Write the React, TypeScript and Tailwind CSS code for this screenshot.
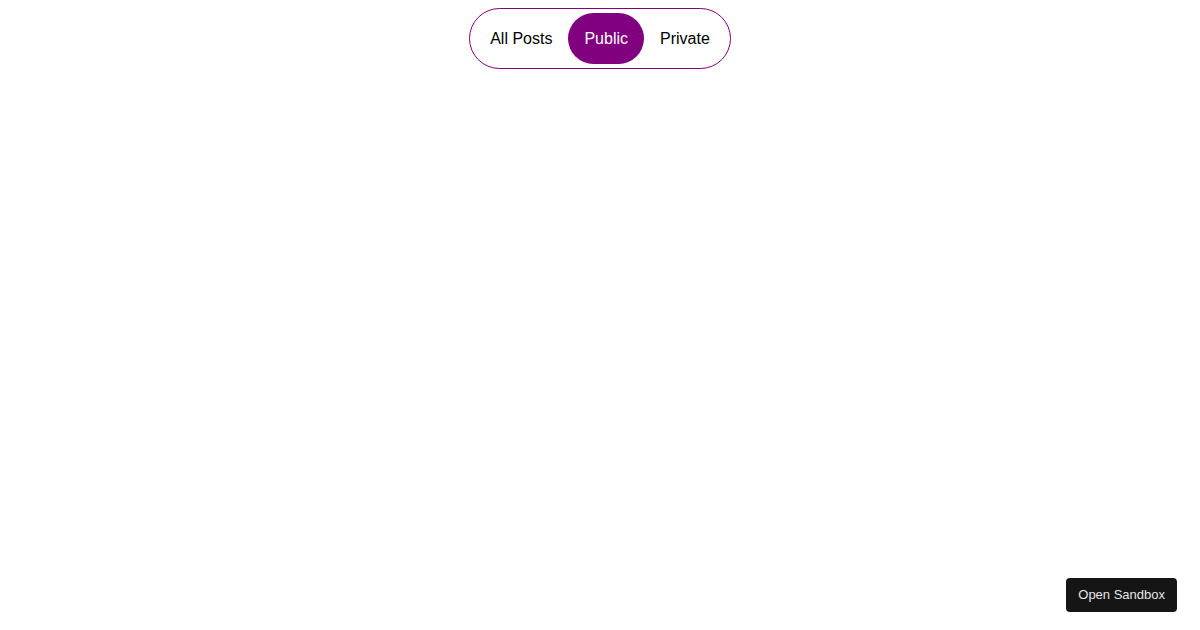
export default function App() {
  const tabs = ["All Posts", "Public", "Private"];
  const active = "Public";

  return (
    <div className="min-h-screen bg-white font-['Liberation_Sans',Arial,sans-serif]">
      <div className="flex justify-center pt-2">
        <div className="flex rounded-full border border-[#800080] p-1">
          {tabs.map((tab) => (
            <button
              key={tab}
              className={
                tab === active
                  ? "rounded-full bg-[#800080] p-4 text-base leading-[19px] text-white"
                  : "rounded-full p-4 text-base leading-[19px] text-black"
              }
            >
              {tab}
            </button>
          ))}
        </div>
      </div>

      <button className="fixed bottom-[18px] right-[23px] h-[34px] rounded bg-[#151515] px-3 text-[13px] text-[#e5e5e5]">
        Open Sandbox
      </button>
    </div>
  );
}
